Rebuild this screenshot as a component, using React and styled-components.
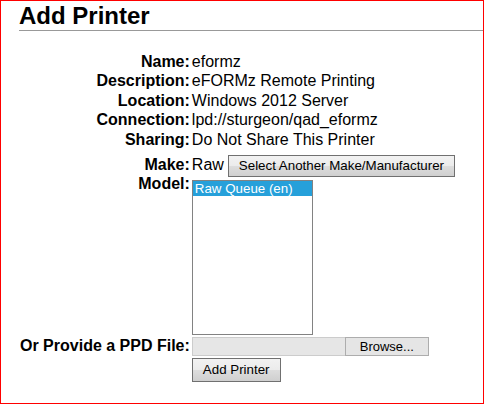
import React from 'react';
import styled, { createGlobalStyle } from 'styled-components';

const GlobalStyle = createGlobalStyle`
  html, body {
    margin: 0;
    padding: 0;
    background: #fff;
  }
  body {
    font-family: "Liberation Sans", Arial, sans-serif;
    color: #000;
  }
`;

const Frame = styled.div`
  box-sizing: border-box;
  width: 484px;
  height: 404px;
  border: 1px solid #ff0000;
  padding-left: 18px;
`;

const Heading = styled.h2`
  margin: 0;
  font-size: 24px;
  line-height: 29px;
  font-weight: bold;
  border-bottom: 1px solid #999;
`;

const Form = styled.div`
  display: grid;
  grid-template-columns: auto 1fr;
  column-gap: 2px;
  align-items: baseline;
  margin: 21px 0 0 1px;
  font-size: 16px;
  line-height: 19.4px;
`;

const Label = styled.div`
  font-weight: bold;
  text-align: right;
  white-space: nowrap;
  align-self: ${(p) => p.$align || 'baseline'};
  margin-top: ${(p) => p.$shift || 0}px;
`;

const Value = styled.div`
  white-space: nowrap;
  align-self: ${(p) => p.$align || 'baseline'};
`;

const Button = styled.button`
  display: inline-block;
  box-sizing: border-box;
  height: ${(p) => p.$height || 22}px;
  margin: ${(p) => p.$margin || '0'};
  padding: 0 10px;
  font-family: "Liberation Sans", Arial, sans-serif;
  font-size: 13.33px;
  line-height: ${(p) => (p.$height || 22) - 2}px;
  color: #000;
  border: 1px solid #707070;
  border-radius: 0;
  background: linear-gradient(#f2f2f2 0%, #ebebeb 50%, #dddddd 51%, #cfcfcf 100%);
  vertical-align: baseline;
`;

const ListBox = styled.div`
  box-sizing: border-box;
  width: 121px;
  height: 155px;
  margin-top: 1px;
  border: 1px solid #828282;
  background: #fff;
`;

const Option = styled.div`
  height: 15px;
  padding-left: 2px;
  font-size: 13.33px;
  line-height: 15px;
  color: ${(p) => (p.$selected ? '#fff' : '#000')};
  background: ${(p) => (p.$selected ? '#26a0da' : 'transparent')};
`;

const FileInput = styled.div`
  display: flex;
  margin-top: 2px;
  height: 19px;
`;

const FileName = styled.div`
  box-sizing: border-box;
  width: 153px;
  background: #e6e6e6;
  border: 1px solid #cccccc;
  border-right: none;
`;

const Browse = styled.div`
  box-sizing: border-box;
  width: 84px;
  background: #e5e5e5;
  border: 1px solid #adadad;
  font-size: 13px;
  line-height: 17px;
  text-align: center;
`;

const fields = [
  ['Name:', 'eformz'],
  ['Description:', 'eFORMz Remote Printing'],
  ['Location:', 'Windows 2012 Server'],
  ['Connection:', 'lpd://sturgeon/qad_eformz'],
  ['Sharing:', 'Do Not Share This Printer'],
];

const App = () => (
  <>
    <GlobalStyle />
    <Frame>
      <Heading>Add Printer</Heading>
      <Form>
        {fields.map(([label, value]) => (
          <React.Fragment key={label}>
            <Label>{label}</Label>
            <Value>{value}</Value>
          </React.Fragment>
        ))}

        <Label>Make:</Label>
        <Value>
          Raw
          <Button $margin="6px 0 2px 4px">Select Another Make/Manufacturer</Button>
        </Value>

        <Label $align="start" $shift={-5}>Model:</Label>
        <Value $align="start">
          <ListBox>
            <Option $selected>Raw Queue (en)</Option>
          </ListBox>
        </Value>

        <Label $align="center">Or Provide a PPD File:</Label>
        <Value $align="center">
          <FileInput>
            <FileName />
            <Browse>Browse...</Browse>
          </FileInput>
        </Value>

        <div />
        <Value $align="start">
          <Button $height={24} $margin="2px 0 0 0">Add Printer</Button>
        </Value>
      </Form>
    </Frame>
  </>
);

export default App;
